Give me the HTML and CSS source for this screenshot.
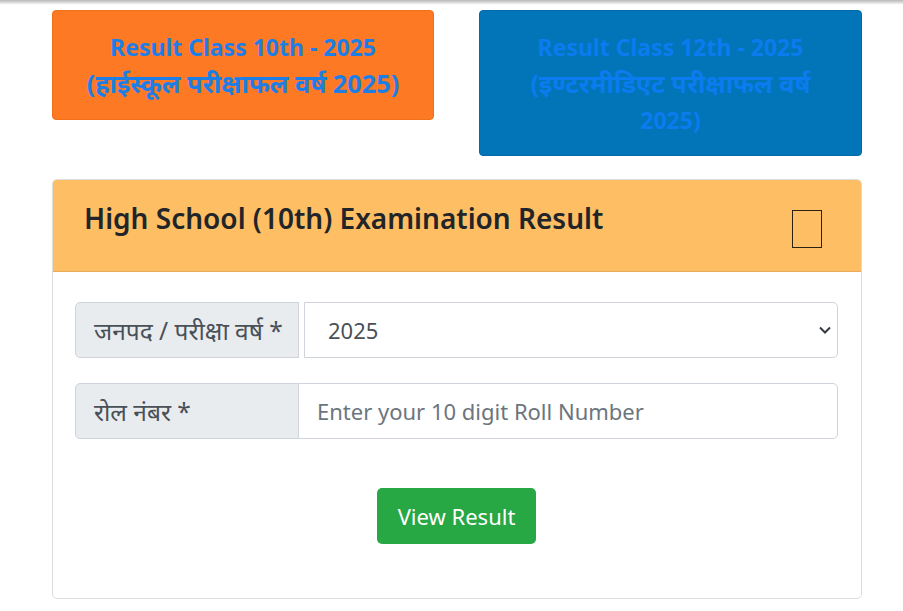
FILE: index.html
```html
<!DOCTYPE html>
<html lang="hi">
<head>
<meta charset="utf-8">
<title>Result 2025</title>
<link rel="stylesheet" href="styles.css">
</head>
<body>
<div class="topbar"></div>
<main class="container">
  <div class="links">
    <a class="link-btn orange" href="#">Result Class 10th - 2025<br><span class="deva">(हाईस्कूल परीक्षाफल वर्ष 2025)</span></a>
    <a class="link-btn blue" href="#">Result Class 12th - 2025<br><span class="deva">(इण्टरमीडिएट परीक्षाफल वर्ष</span><br>2025)</a>
  </div>
  <section class="card">
    <header class="card-header">
      <h2 class="card-title">High School (10th) Examination Result</h2>
      <span class="tofu"></span>
    </header>
    <form class="card-body">
      <div class="input-group gap">
        <span class="group-label">जनपद / परीक्षा वर्ष *</span>
        <div class="select-wrap">
          <select class="control select">
            <option>2025</option>
          </select>
          <svg class="chevron" width="14" height="10" viewBox="0 0 14 10"><path d="M2 2.5 L7 7.5 L12 2.5" fill="none" stroke="#343a40" stroke-width="2"/></svg>
        </div>
      </div>
      <div class="input-group">
        <span class="group-label">रोल नंबर *</span>
        <input class="control input" type="text" placeholder="Enter your 10 digit Roll Number">
      </div>
      <div class="actions">
        <button class="btn-view" type="button">View Result</button>
      </div>
    </form>
  </section>
</main>
</body>
</html>
```
FILE: styles.css
```css
* { box-sizing: border-box; }
html, body { margin: 0; padding: 0; background: #fff; }
body {
  font-family: "Noto Sans", "Open Sans", sans-serif;
  color: #212529;
}
.topbar {
  height: 5px;
  background: linear-gradient(to bottom, #b8b8b8 0%, #d8d8d8 45%, #f4f4f4 80%, #fff 100%);
}
.container {
  width: 810px;
  margin: 5px 0 0 52px;
}
.links {
  display: grid;
  grid-template-columns: 382px 383px;
  column-gap: 45px;
  align-items: start;
}
.link-btn {
  display: block;
  text-align: center;
  text-decoration: none;
  font-weight: 700;
  font-size: 23px;
  line-height: 36px;
  padding: 18px 4px 17px;
  border-radius: 4px;
  color: #1d7fe6;
}
.deva { font-size: 1.1em; }
.orange { background: #fd7923; border: 1px solid #f0701a; }
.blue { background: #0275b8; border: 1px solid #026aa6; color: #0a7cf0; }
.card {
  margin-top: 23px;
  border: 1px solid #dcdcdc;
  border-radius: 5px;
  overflow: hidden;
}
.card-header {
  height: 92px;
  background: #febe63;
  border-bottom: 1px solid #e6ac5a;
  display: flex;
  align-items: center;
  justify-content: space-between;
  padding: 0 39px 0 31px;
}
.card-title {
  margin: 0 0 16px;
  font-size: 28px;
  font-weight: 600;
  color: #212529;
}
.tofu {
  width: 30px;
  height: 38px;
  border: 1.5px solid #2a2113;
  margin-top: 6px;
}
.card-body {
  padding: 30px 23px 54px 22px;
  display: flex;
  flex-direction: column;
}
.input-group {
  display: flex;
  height: 56px;
  margin-bottom: 25px;
}
.group-label {
  width: 224px;
  flex: none;
  background: #e9ecef;
  border: 1px solid #ced4da;
  border-radius: 5px 0 0 5px;
  color: #495057;
  font-size: 24.5px;
  display: flex;
  align-items: center;
  padding-left: 18px;
}
.gap .group-label { margin-right: 5px; }
.control {
  flex: 1;
  height: 56px;
  border: 1px solid #ced4da;
  border-radius: 0 5px 5px 0;
  font-family: inherit;
  font-size: 22px;
  color: #495057;
  background: #fff;
  margin: 0;
  outline: none;
}
.group-label + .control { margin-left: -1px; }
.select-wrap {
  flex: 1;
  position: relative;
  display: flex;
}
.select {
  appearance: none;
  -webkit-appearance: none;
  padding-left: 23px;
  width: 100%;
}
.chevron {
  position: absolute;
  right: 6px;
  top: 23px;
}
.input { padding-left: 18px; }
.input::placeholder { color: #6c757d; }
.actions {
  display: flex;
  justify-content: center;
  margin-top: 24px;
}
.btn-view {
  background: #28a745;
  color: #fff;
  border: none;
  border-radius: 5px;
  font-family: inherit;
  font-size: 22px;
  height: 56px;
  padding: 0 21px;
}
```
